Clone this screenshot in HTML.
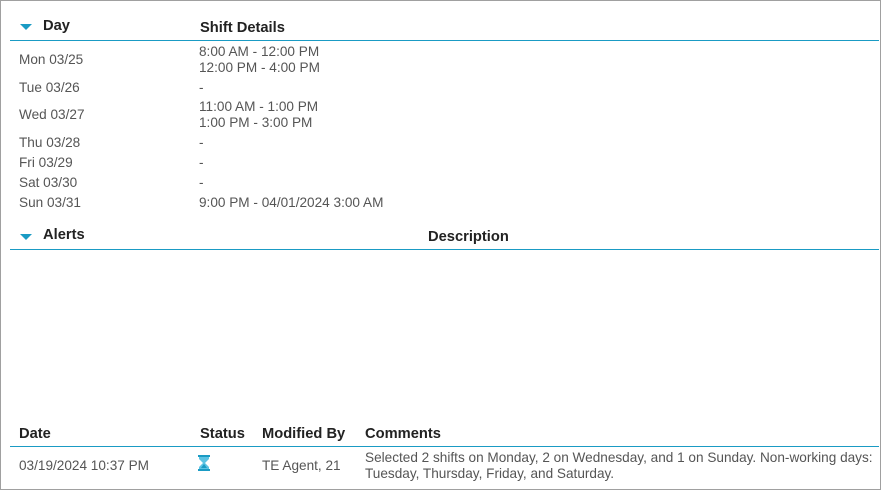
<!DOCTYPE html>
<html><head><style>
body{margin:0;width:881px;height:490px;position:relative;overflow:hidden;background:#fff;font-family:"Liberation Sans",Arial,sans-serif;}
.frame{position:absolute;left:0;top:0;width:879px;height:488px;border:1px solid #a0a0a0;border-right:2px solid #a0a0a0;}
.w{position:absolute;left:0;top:1px;width:881px;height:489px;}
.t{position:absolute;font-size:13.6px;color:#555;white-space:nowrap;line-height:16px;}
.h{position:absolute;font-size:14.7px;font-weight:bold;color:#222;white-space:nowrap;line-height:16px;}
.line{position:absolute;left:10px;width:869px;height:1px;background:#1a9bc4;}
.tri{position:absolute;width:0;height:0;border-left:6px solid transparent;border-right:6px solid transparent;border-top:6px solid #1a9bc4;}
</style></head><body>
<div class="frame"></div>
<div class="tri" style="left:20px;top:24px"></div>
<div class="tri" style="left:20px;top:234px"></div>
<div class="line" style="top:40px"></div>
<div class="line" style="top:249px"></div>
<div class="line" style="top:446px"></div>
<svg style="position:absolute;left:197px;top:455px" width="14" height="16" viewBox="0 0 14 16"><rect x="1" y="0" width="12" height="2" fill="#1a9bc4"/><rect x="1" y="14" width="12" height="2" fill="#1a9bc4"/><path d="M2 2h10v2L8 8l4 4v2H2v-2l4-4-4-4z" fill="#5cc3e3"/><path d="M4 13l3-4 3 4z" fill="#1a9bc4"/></svg>
<div class="w">
<div class="h" style="left:43px;top:17px">Day</div>
<div class="h" style="left:200px;top:19px">Shift Details</div>
<div class="t" style="left:19px;top:51px">Mon 03/25</div>
<div class="t" style="left:199px;top:43px">8:00 AM - 12:00 PM</div>
<div class="t" style="left:199px;top:59px">12:00 PM - 4:00 PM</div>
<div class="t" style="left:19px;top:79px">Tue 03/26</div>
<div class="t" style="left:199px;top:79px">-</div>
<div class="t" style="left:19px;top:106px">Wed 03/27</div>
<div class="t" style="left:199px;top:98px">11:00 AM - 1:00 PM</div>
<div class="t" style="left:199px;top:114px">1:00 PM - 3:00 PM</div>
<div class="t" style="left:19px;top:134px">Thu 03/28</div>
<div class="t" style="left:199px;top:134px">-</div>
<div class="t" style="left:19px;top:154px">Fri 03/29</div>
<div class="t" style="left:199px;top:154px">-</div>
<div class="t" style="left:19px;top:174px">Sat 03/30</div>
<div class="t" style="left:199px;top:174px">-</div>
<div class="t" style="left:19px;top:194px">Sun 03/31</div>
<div class="t" style="left:199px;top:194px">9:00 PM - 04/01/2024 3:00 AM</div>
<div class="h" style="left:43px;top:226px">Alerts</div>
<div class="h" style="left:428px;top:228px">Description</div>
<div class="h" style="left:19px;top:425px">Date</div>
<div class="h" style="left:200px;top:425px">Status</div>
<div class="h" style="left:262px;top:425px">Modified By</div>
<div class="h" style="left:365px;top:425px">Comments</div>
<div class="t" style="left:19px;top:457px">03/19/2024 10:37 PM</div>
<div class="t" style="left:262px;top:457px">TE Agent, 21</div>
<div class="t" style="left:365px;top:449px;line-height:16px">Selected 2 shifts on Monday, 2 on Wednesday, and 1 on Sunday. Non-working days:<br>Tuesday, Thursday, Friday, and Saturday.</div>
</div>
</body></html>
